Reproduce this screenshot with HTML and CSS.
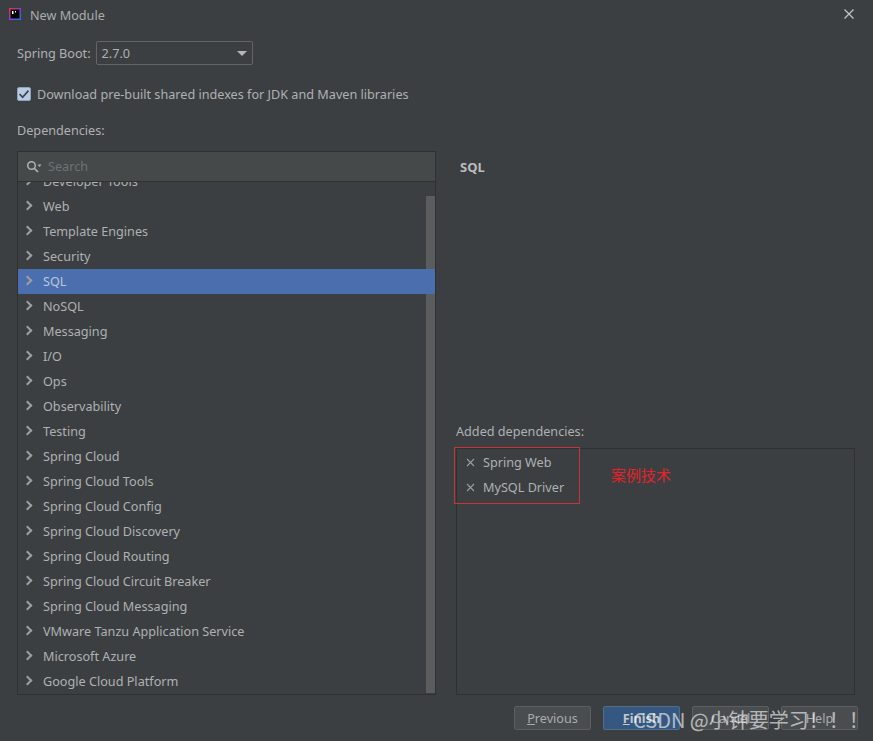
FILE: index.html
```html
<!DOCTYPE html>
<html lang="en">
<head>
<meta charset="utf-8">
<title>New Module</title>
<link rel="stylesheet" href="styles.css">
</head>
<body>
<div class="dialog">
  <header class="titlebar">
    <svg class="logo" width="12" height="12" viewBox="0 0 12 12">
      <defs><linearGradient id="lg" x1="0" y1="0" x2="1" y2="1"><stop offset="0" stop-color="#f0323c"/><stop offset="0.5" stop-color="#8a3dd0"/><stop offset="1" stop-color="#0a7cf0"/></linearGradient></defs>
      <rect width="12" height="12" fill="url(#lg)"/>
      <rect x="1.5" y="1.5" width="9" height="9" fill="#000"/>
      <rect x="3" y="3" width="1.5" height="3" fill="#fff"/>
      <rect x="6" y="3" width="1" height="1.5" fill="#fff"/>
    </svg>
    <span class="title">New Module</span>
    <svg class="close" width="10" height="10" viewBox="0 0 10 10"><path d="M0.5 0.5L9.5 9.5M9.5 0.5L0.5 9.5" stroke="#c4c6c8" stroke-width="1.2" fill="none"/></svg>
  </header>

  <div class="boot-row">
    <span>Spring Boot:</span>
    <div class="select"><span>2.7.0</span><i class="caret"></i></div>
  </div>

  <label class="check-row">
    <span class="checkbox"><svg width="14" height="14" viewBox="0 0 14 14"><path d="M2.5 7L5.6 10.2L11.5 3.6" stroke="#3c4650" stroke-width="1.7" fill="none"/></svg></span>
    <span>Download pre-built shared indexes for JDK and Maven libraries</span>
  </label>

  <div class="dep-label">Dependencies:</div>

  <main class="columns">
    <section class="left">
      <div class="search">
        <svg width="16" height="14" viewBox="0 0 16 14"><circle cx="5.5" cy="5.5" r="3.8" stroke="#afb1b3" stroke-width="1.5" fill="none"/><path d="M8.3 8.3L12 12" stroke="#afb1b3" stroke-width="1.7"/><path d="M11.5 4.5h4l-2 2.4z" fill="#afb1b3"/></svg>
        <span class="search-text">Search</span>
      </div>
      <div class="viewport">
        <ul class="tree">
          <li><i class="chev"></i>Developer Tools</li>
          <li><i class="chev"></i>Web</li>
          <li><i class="chev"></i>Template Engines</li>
          <li><i class="chev"></i>Security</li>
          <li class="selected"><i class="chev"></i>SQL</li>
          <li><i class="chev"></i>NoSQL</li>
          <li><i class="chev"></i>Messaging</li>
          <li><i class="chev"></i>I/O</li>
          <li><i class="chev"></i>Ops</li>
          <li><i class="chev"></i>Observability</li>
          <li><i class="chev"></i>Testing</li>
          <li><i class="chev"></i>Spring Cloud</li>
          <li><i class="chev"></i>Spring Cloud Tools</li>
          <li><i class="chev"></i>Spring Cloud Config</li>
          <li><i class="chev"></i>Spring Cloud Discovery</li>
          <li><i class="chev"></i>Spring Cloud Routing</li>
          <li><i class="chev"></i>Spring Cloud Circuit Breaker</li>
          <li><i class="chev"></i>Spring Cloud Messaging</li>
          <li><i class="chev"></i>VMware Tanzu Application Service</li>
          <li><i class="chev"></i>Microsoft Azure</li>
          <li><i class="chev"></i>Google Cloud Platform</li>
        </ul>
        <div class="scrollthumb"></div>
      </div>
    </section>

    <section class="right">
      <h2 class="group-title">SQL</h2>
      <div class="added-label">Added dependencies:</div>
      <div class="added-box">
        <div class="added-item"><svg width="9" height="9" viewBox="0 0 9 9"><path d="M1 1L8 8M8 1L1 8" stroke="#9a9da0" stroke-width="1.1"/></svg>Spring Web</div>
        <div class="added-item"><svg width="9" height="9" viewBox="0 0 9 9"><path d="M1 1L8 8M8 1L1 8" stroke="#9a9da0" stroke-width="1.1"/></svg>MySQL Driver</div>
        <div class="red-frame"></div>
        <div class="red-note">案例技术</div>
      </div>
    </section>
  </main>

  <footer class="buttons">
    <button class="btn"><u>P</u>revious</button>
    <button class="btn primary"><u>F</u>inish</button>
    <button class="btn">Cancel</button>
    <button class="btn">Help</button>
  </footer>
</div>
<div class="watermark">CSDN @小钟要学习！！！</div>
</body>
</html>
```
FILE: styles.css
```css
* { box-sizing: border-box; }
html, body { margin: 0; height: 100%; background: #3c3f41; }
body {
  width: 873px;
  height: 741px;
  overflow: hidden;
  position: relative;
  font-family: "Noto Sans", "Open Sans", "Noto Sans CJK SC", sans-serif;
  font-size: 12.65px;
  color: #aeb1b3;
}
.dialog { display: flex; flex-direction: column; height: 741px; padding: 0 15px 0 17px; }

.titlebar { display: flex; align-items: center; height: 30px; margin-left: -8px; margin-right: -1px; line-height: 28px; }
.logo { margin-right: 9px; margin-top: -2px; }
.title { color: #a9acae; flex: 1; }
.close { margin-right: 5px; margin-top: -2px; }

.boot-row { display: flex; align-items: center; gap: 5px; height: 24px; margin-top: 11px; }
.select {
  width: 157px; height: 24px;
  border: 1px solid #646464; border-radius: 2px;
  padding: 0 5px 0 5px;
  display: flex; align-items: center; justify-content: space-between;
}
.caret { width: 0; height: 0; border-left: 5px solid transparent; border-right: 5px solid transparent; border-top: 5px solid #b4b6b8; }

.check-row { display: flex; align-items: center; gap: 6px; height: 20px; margin-top: 19px; }
.checkbox {
  width: 14px; height: 14px; background: #b8cbe2; border: 1px solid #8ea3bb; border-radius: 2px;
  display: flex; align-items: center; justify-content: center;
}
.checkbox svg { flex: none; }

.dep-label { height: 20px; line-height: 20px; margin-top: 16px; }

.columns { display: flex; margin-top: 11px; height: 544px; }
.left { width: 419px; border: 1px solid #2e3032; display: flex; flex-direction: column; }
.search {
  height: 30px; flex: none; background: #45494a; border-bottom: 1px solid #323232;
  display: flex; align-items: center; gap: 6px; padding-left: 8px; color: #6f7274;
}
.search-text { margin-top: -2px; }
.viewport { position: relative; flex: 1; overflow: hidden; }
.tree { list-style: none; margin: -13px 0 0; padding: 0; }
.tree li { display: flex; align-items: center; height: 25px; padding: 0 0 2px 25px; position: relative; }
.tree li.selected { background: #4b6eaf; color: #bcc6d6; z-index: 1; }
.chev {
  position: absolute; left: 6px; top: 8px;
  width: 7px; height: 7px;
  border-top: 2px solid #9c9ea0; border-right: 2px solid #9c9ea0;
  transform: rotate(45deg);
}
.scrollthumb { position: absolute; right: 0; top: 14px; bottom: 1px; width: 9px; background: #5a5c5e; }

.right { position: relative; flex: 1; margin-left: 20px; display: flex; flex-direction: column; }
.group-title { margin: 7px 0 0 4px; height: 18px; line-height: 18px; font-size: 13px; font-weight: 700; color: #b9bcbe; }
.added-label { margin-top: 245px; height: 20px; line-height: 20px; }
.added-box { position: relative; margin-top: 7px; flex: 1; width: 399px; border: 1px solid #2e3032; padding-top: 1px; }
.added-item { display: flex; align-items: center; gap: 8px; height: 25px; padding: 0 0 1px 9px; }
.red-frame { position: absolute; left: -3px; top: -2px; width: 126px; height: 57px; border: 1px solid #c8343a; }
.red-note { position: absolute; left: 154px; top: 15px; font-family: "Noto Sans CJK SC", sans-serif; font-size: 15px; line-height: 22px; color: #e62129; }

.buttons { display: flex; justify-content: flex-end; gap: 12px; margin-top: 11px; padding-right: 0; }
.btn {
  width: 77px; height: 24px; padding: 0;
  font: inherit; color: #a9acae;
  background: #4a4d4f; border: 1px solid #5c5f61; border-radius: 2px;
}
.btn.primary { background: #365880; border-color: #4c708c; color: #c3c8cc; font-weight: 700; }

.watermark {
  position: absolute; left: 633px; top: 705px;
  font-family: "Noto Sans CJK SC", sans-serif; font-size: 20px; white-space: nowrap;
  color: rgba(255,255,255,0.62);
}
```
